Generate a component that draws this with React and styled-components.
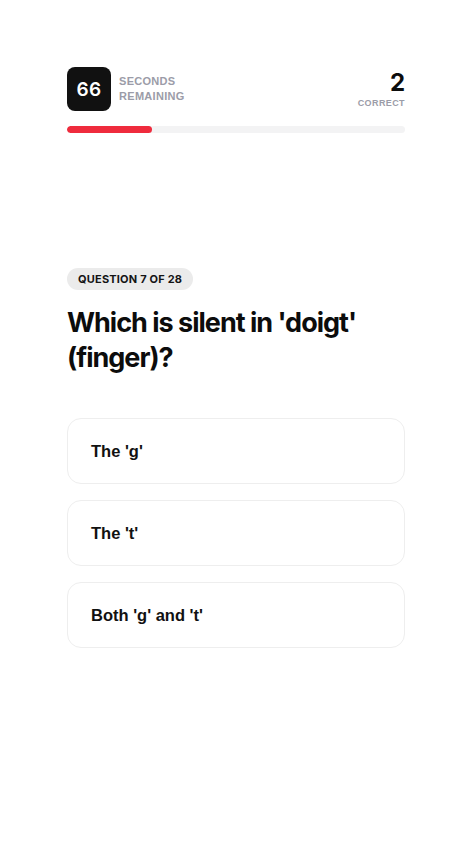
import React from 'react';
import styled, { createGlobalStyle } from 'styled-components';

const GlobalStyle = createGlobalStyle`
  html, body {
    margin: 0;
    padding: 0;
    background: #ffffff;
  }
  body {
    font-family: "Liberation Sans", Arial, sans-serif;
    color: #111111;
  }
`;

const options = ["The 'g'", "The 't'", "Both 'g' and 't'"];

function App() {
  const timeLeft = 66;
  const progress = 25;

  return (
    <>
      <GlobalStyle />
      <Screen>
        <Header>
          <Timer>
            <TimerBox>{timeLeft}</TimerBox>
            <TimerLabel>
              Seconds
              <br />
              Remaining
            </TimerLabel>
          </Timer>
          <Score>
            <ScoreValue>2</ScoreValue>
            <ScoreLabel>Correct</ScoreLabel>
          </Score>
        </Header>
        <Track>
          <Fill style={{ width: `${progress}%` }} />
        </Track>

        <Question>
          <Badge>QUESTION 7 OF 28</Badge>
          <Title>Which is silent in 'doigt' (finger)?</Title>
        </Question>

        <Options>
          {options.map((o) => (
            <Option key={o}>{o}</Option>
          ))}
        </Options>
      </Screen>
    </>
  );
}

const Screen = styled.main`
  min-height: 856px;
  box-sizing: border-box;
  padding: 67px 69px 0 67px;
  display: flex;
  flex-direction: column;
`;

const Header = styled.header`
  display: flex;
  justify-content: space-between;
  align-items: flex-start;
`;

const Timer = styled.div`
  display: flex;
  align-items: center;
  gap: 8px;
`;

const TimerBox = styled.div`
  width: 44px;
  height: 44px;
  border-radius: 8px;
  background: #111111;
  color: #ffffff;
  display: flex;
  align-items: center;
  justify-content: center;
  font-family: Inter, "Liberation Sans", sans-serif;
  font-size: 19px;
  font-weight: 600;
  letter-spacing: 0.3px;
`;

const TimerLabel = styled.div`
  font-size: 11px;
  font-weight: 700;
  line-height: 15px;
  letter-spacing: 0.3px;
  text-transform: uppercase;
  color: #9b9ca8;
`;

const Score = styled.div`
  display: flex;
  flex-direction: column;
  align-items: flex-end;
  padding-top: 3px;
`;

const ScoreValue = styled.div`
  font-family: Inter, "Liberation Sans", sans-serif;
  font-size: 24px;
  font-weight: 700;
  line-height: 26px;
  color: #0c0c0c;
`;

const ScoreLabel = styled.div`
  font-size: 9px;
  font-weight: 700;
  letter-spacing: 0.4px;
  text-transform: uppercase;
  color: #9b9ca8;
  margin-top: 2px;
`;

const Track = styled.div`
  margin-top: 15px;
  height: 7px;
  border-radius: 4px;
  background: #f3f3f4;
  overflow: hidden;
`;

const Fill = styled.div`
  height: 100%;
  border-radius: 4px;
  background: #ef2b3d;
`;

const Question = styled.section`
  margin-top: 135px;
  display: flex;
  flex-direction: column;
  align-items: flex-start;
`;

const Badge = styled.span`
  height: 22px;
  padding: 0 11px;
  border-radius: 11px;
  background: #ebebeb;
  display: inline-flex;
  align-items: center;
  font-family: Inter, "Liberation Sans", sans-serif;
  font-size: 11px;
  font-weight: 700;
  letter-spacing: 0.2px;
  color: #141414;
`;

const Title = styled.h1`
  margin: 15px 0 0;
  font-family: Inter, "Liberation Sans", sans-serif;
  font-size: 27px;
  font-weight: 700;
  line-height: 35px;
  letter-spacing: -1px;
  color: #0c0c0c;
`;

const Options = styled.div`
  margin-top: 43px;
  display: flex;
  flex-direction: column;
  gap: 16px;
`;

const Option = styled.button`
  height: 66px;
  box-sizing: border-box;
  padding: 0 23px;
  border: 1.5px solid #eeeeee;
  border-radius: 14px;
  background: #ffffff;
  text-align: left;
  font-family: "Liberation Sans", Arial, sans-serif;
  font-size: 16.5px;
  font-weight: 700;
  color: #111111;
  cursor: pointer;
`;

export default App;
